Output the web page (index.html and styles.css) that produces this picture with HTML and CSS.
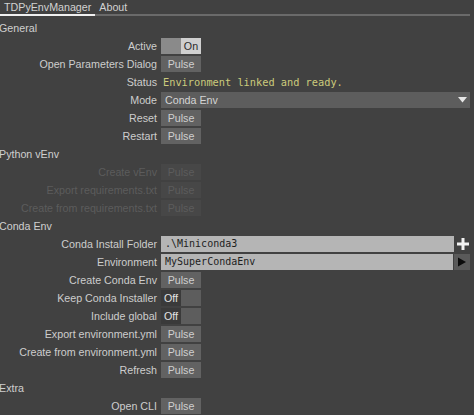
FILE: index.html
```html
<!DOCTYPE html>
<html lang="en">
<head>
  <meta charset="UTF-8" />
  <title>TDPyEnvManager</title>
  <link rel="stylesheet" href="styles.css">
</head>
<body>
  <div class="tabbar">
    <div class="tab active">TDPyEnvManager</div>
    <div class="tab">About</div>
    <div class="tab-fill"></div>
  </div>

  <div class="panel">
    <div class="header">General</div>
    <div class="row"><span class="label">Active</span>
      <div class="toggle on"><span class="knob"></span><span class="state">On</span></div></div>
    <div class="row"><span class="label">Open Parameters Dialog</span><div class="pulse">Pulse</div></div>
    <div class="row"><span class="label">Status</span><span class="status">Environment linked and ready.</span></div>
    <div class="row"><span class="label">Mode</span>
      <div class="menu">Conda Env
        <svg class="menu-arrow" width="9" height="6" viewBox="0 0 9 6"><path d="M0 0H9L4.5 5.5Z" fill="#e6e6e6"/></svg>
      </div></div>
    <div class="row"><span class="label">Reset</span><div class="pulse">Pulse</div></div>
    <div class="row"><span class="label">Restart</span><div class="pulse">Pulse</div></div>

    <div class="header">Python vEnv</div>
    <div class="row disabled"><span class="label">Create vEnv</span><div class="pulse">Pulse</div></div>
    <div class="row disabled"><span class="label">Export requirements.txt</span><div class="pulse">Pulse</div></div>
    <div class="row disabled"><span class="label">Create from requirements.txt</span><div class="pulse">Pulse</div></div>

    <div class="header">Conda Env</div>
    <div class="row"><span class="label">Conda Install Folder</span>
      <div class="field-wrap">
        <div class="field">.\Miniconda3</div>
        <svg class="plus" width="14" height="14" viewBox="0 0 14 14"><path d="M5.5 1H8.5V5.5H13V8.5H8.5V13H5.5V8.5H1V5.5H5.5Z" fill="#f2f2f2"/></svg>
      </div></div>
    <div class="row"><span class="label">Environment</span>
      <div class="field-wrap">
        <div class="field">MySuperCondaEnv</div>
        <div class="play"><svg width="10" height="10" viewBox="0 0 10 10"><path d="M1 0.5L9 5L1 9.5Z" fill="#0c0c0c"/></svg></div>
      </div></div>
    <div class="row"><span class="label">Create Conda Env</span><div class="pulse">Pulse</div></div>
    <div class="row"><span class="label">Keep Conda Installer</span>
      <div class="toggle off"><span class="state">Off</span><span class="knob"></span></div></div>
    <div class="row"><span class="label">Include global</span>
      <div class="toggle off"><span class="state">Off</span><span class="knob"></span></div></div>
    <div class="row"><span class="label">Export environment.yml</span><div class="pulse">Pulse</div></div>
    <div class="row"><span class="label">Create from environment.yml</span><div class="pulse">Pulse</div></div>
    <div class="row"><span class="label">Refresh</span><div class="pulse">Pulse</div></div>

    <div class="header">Extra</div>
    <div class="row"><span class="label">Open CLI</span><div class="pulse">Pulse</div></div>
  </div>
</body>
</html>
```

FILE: styles.css
```css
body {
  margin: 0;
  background: #414141;
  color: #cdcdcd;
  font-family: "Liberation Sans", Arial, sans-serif;
  font-size: 10.7px;
  width: 470px;
  overflow: hidden;
}
.tabbar {
  display: flex;
  height: 16px;
  margin-bottom: 3px;
}
.tab {
  padding: 0 4px;
  line-height: 14px;
  color: #d2d2d2;
  border-bottom: 2px solid #6a6a6a;
}
.tab.active {
  border-bottom-color: #f0f0f0;
}
.tab-fill {
  flex: 1;
  border-bottom: 2px solid #6a6a6a;
}
.header {
  height: 18px;
  line-height: 18px;
  margin-left: -1px;
  color: #cfcfcf;
}
.row {
  display: grid;
  grid-template-columns: 157px 1fr;
  column-gap: 4px;
  height: 18px;
  align-items: center;
}
.label {
  text-align: right;
  white-space: nowrap;
}
.pulse {
  width: 40px;
  height: 16px;
  line-height: 16px;
  text-align: center;
  background: #626262;
  color: #cfcfcf;
}
.disabled .label {
  color: #5c5c5c;
}
.disabled .pulse {
  background: #474747;
  color: #5c5c5c;
}
.toggle {
  display: flex;
  width: 40px;
  height: 16px;
  line-height: 16px;
}
.toggle span {
  width: 20px;
  text-align: center;
}
.toggle.on .knob {
  background: #8a8a8a;
}
.toggle.on .state {
  background: #cfcfcf;
  color: #2c2c2c;
}
.toggle.off .state {
  background: #3a3a3a;
  color: #e2e2e2;
}
.toggle.off .knob {
  background: #5d5d5d;
}
.status {
  padding-left: 2px;
  font-family: "DejaVu Sans Mono", "Liberation Mono", monospace;
  font-size: 10.3px;
  color: #cccb7c;
  white-space: nowrap;
}
.menu {
  display: flex;
  align-items: center;
  justify-content: space-between;
  height: 16px;
  padding: 0 3px 0 4px;
  background: #5d5d5d;
  color: #d4d4d4;
}
.field-wrap {
  display: flex;
  align-items: center;
  gap: 1px;
  height: 16px;
}
.field {
  flex: 1;
  height: 16px;
  line-height: 16px;
  padding-left: 4px;
  background: #b5b5b5;
  color: #1e1e1e;
  font-family: "DejaVu Sans Mono", "Liberation Mono", monospace;
  font-size: 10px;
}
.plus {
  margin: 0 0 0 1px;
}
.play {
  display: flex;
  align-items: center;
  justify-content: center;
  width: 16px;
  height: 16px;
  background: #5a5a5a;
}
```
